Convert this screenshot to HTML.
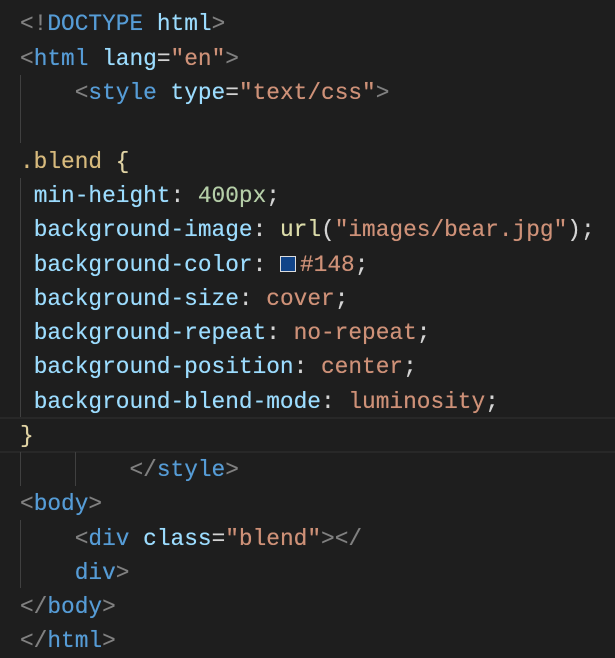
<!DOCTYPE html>
<html><head><style>
body{margin:0;width:615px;height:658px;background:#1e1e1e;overflow:hidden;position:relative;font-family:"Liberation Mono",monospace;font-size:22.8px;color:#d4d4d4}
.l{position:absolute;left:20px;height:34px;line-height:34px;white-space:pre;margin-top:2px;text-shadow:0 0 0.4px currentColor}
.g{color:#808080}.t{color:#569cd6}.a{color:#9cdcfe}.s{color:#ce9178}.sel{color:#d7ba7d}.b{color:#e0d3a4}.n{color:#b5cea8}.f{color:#dcdcaa}
.v{position:absolute;width:1px;background:#404040}
.hl{position:absolute;left:0;right:0;top:417px;height:32px;border-top:2px solid #282828;border-bottom:2px solid #282828}
.sw{display:inline-block;width:14px;height:14px;border:1.5px solid #ddd;background:#148;vertical-align:-1px;margin-right:4px}
</style></head><body>
<div class="hl"></div>
<div class="v" style="left:20px;top:75px;height:68px"></div>
<div class="v" style="left:20px;top:178px;height:239px"></div>
<div class="v" style="left:20px;top:452px;height:34px"></div>
<div class="v" style="left:75px;top:452px;height:34px"></div>
<div class="v" style="left:20px;top:520px;height:68px"></div>
<div class="l" style="top:5px"><span class="g">&lt;!</span><span class="t">DOCTYPE</span> <span class="a">html</span><span class="g">&gt;</span></div>
<div class="l" style="top:40px"><span class="g">&lt;</span><span class="t">html</span> <span class="a">lang</span>=<span class="s">"en"</span><span class="g">&gt;</span></div>
<div class="l" style="top:74px">    <span class="g">&lt;</span><span class="t">style</span> <span class="a">type</span>=<span class="s">"text/css"</span><span class="g">&gt;</span></div>
<div class="l" style="top:143px"><span class="sel">.blend</span> <span class="b">{</span></div>
<div class="l" style="top:177px"> <span class="a">min-height</span>: <span class="n">400px</span>;</div>
<div class="l" style="top:211px"> <span class="a">background-image</span>: <span class="f">url</span>(<span class="s">"images/bear.jpg"</span>);</div>
<div class="l" style="top:246px"> <span class="a">background-color</span>: <span class="sw"></span><span class="s">#148</span>;</div>
<div class="l" style="top:280px"> <span class="a">background-size</span>: <span class="s">cover</span>;</div>
<div class="l" style="top:314px"> <span class="a">background-repeat</span>: <span class="s">no-repeat</span>;</div>
<div class="l" style="top:348px"> <span class="a">background-position</span>: <span class="s">center</span>;</div>
<div class="l" style="top:383px"> <span class="a">background-blend-mode</span>: <span class="s">luminosity</span>;</div>
<div class="l" style="top:417px"><span class="b">}</span></div>
<div class="l" style="top:451px">        <span class="g">&lt;/</span><span class="t">style</span><span class="g">&gt;</span></div>
<div class="l" style="top:485px"><span class="g">&lt;</span><span class="t">body</span><span class="g">&gt;</span></div>
<div class="l" style="top:520px">    <span class="g">&lt;</span><span class="t">div</span> <span class="a">class</span>=<span class="s">"blend"</span><span class="g">&gt;&lt;/</span></div>
<div class="l" style="top:554px">    <span class="t">div</span><span class="g">&gt;</span></div>
<div class="l" style="top:588px"><span class="g">&lt;/</span><span class="t">body</span><span class="g">&gt;</span></div>
<div class="l" style="top:622px"><span class="g">&lt;/</span><span class="t">html</span><span class="g">&gt;</span></div>
</body></html>
